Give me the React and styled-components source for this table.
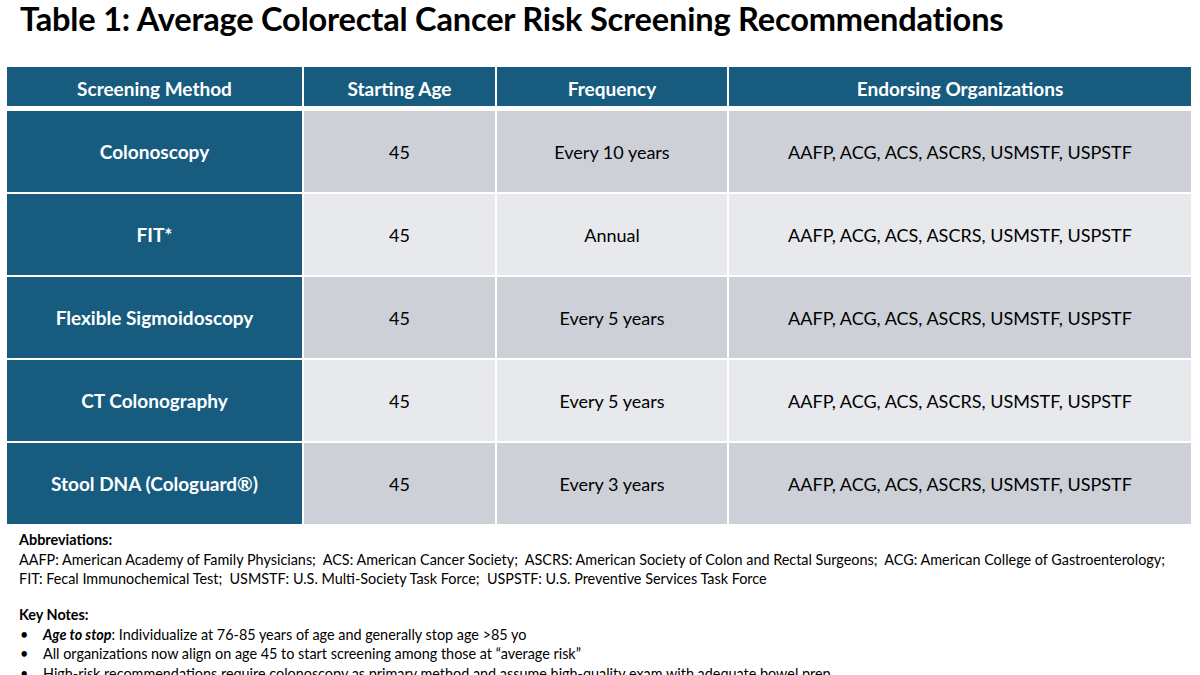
import React from "react";
import styled, { createGlobalStyle } from "styled-components";

const GlobalStyle = createGlobalStyle`
  html, body {
    margin: 0;
    padding: 0;
    background: #ffffff;
  }
  body {
    font-family: Lato, "Open Sans", "Liberation Sans", sans-serif;
    color: #000;
  }
`;

const Page = styled.div`
  width: 1200px;
  height: 675px;
  overflow: hidden;
  padding-left: 7px;
  box-sizing: border-box;
`;

const Title = styled.h1`
  margin: 0;
  height: 67px;
  padding: 2px 0 0 13px;
  box-sizing: border-box;
  font-size: 32.6px;
  line-height: 34px;
  font-weight: 700;
  letter-spacing: -0.2px;
`;

const Table = styled.div`
  display: flex;
  flex-direction: column;
  gap: 5px;
  width: 1184px;
`;

const Grid = styled.div`
  display: grid;
  grid-template-columns: 295px 191px 230px 462px;
  grid-auto-rows: ${(p) => p.$rowHeight}px;
  gap: 2px;
`;

const Cell = styled.div`
  display: flex;
  align-items: center;
  justify-content: center;
  text-align: center;
  font-size: ${(p) => (p.$dark ? "19px" : "18px")};
  background: ${(p) => (p.$dark ? "#175c7f" : p.$alt ? "#e7e9ec" : "#cdd1d7")};
  color: ${(p) => (p.$dark ? "#ffffff" : "#000000")};
  font-weight: ${(p) => (p.$dark ? 700 : 400)};
`;

const HeadCell = styled(Cell)`
  padding-top: 4px;
  box-sizing: border-box;
`;

const Notes = styled.div`
  margin-top: 6px;
  padding-left: 12px;
  font-size: 14.4px;
  line-height: 19.5px;
`;

const Label = styled.div`
  font-weight: 700;
`;

const Spacer = styled.div`
  height: 16.5px;
`;

const Bullets = styled.ul`
  margin: 0;
  padding: 0;
  list-style: none;
`;

const Bullet = styled.li`
  display: flex;
  white-space: nowrap;
  &::before {
    content: "•";
    width: 23px;
    padding-left: 1px;
    flex-shrink: 0;
  }
`;

const headers = ["Screening Method", "Starting Age", "Frequency", "Endorsing Organizations"];

const orgs = "AAFP, ACG, ACS, ASCRS, USMSTF, USPSTF";

const rows = [
  ["Colonoscopy", "45", "Every 10 years"],
  ["FIT*", "45", "Annual"],
  ["Flexible Sigmoidoscopy", "45", "Every 5 years"],
  ["CT Colonography", "45", "Every 5 years"],
  ["Stool DNA (Cologuard®)", "45", "Every 3 years"],
];

export default function App() {
  return (
    <>
      <GlobalStyle />
      <Page>
        <Title>Table 1: Average Colorectal Cancer Risk Screening Recommendations</Title>
        <Table>
          <Grid $rowHeight={39}>
            {headers.map((h) => (
              <HeadCell key={h} $dark>
                {h}
              </HeadCell>
            ))}
          </Grid>
          <Grid $rowHeight={81}>
            {rows.map(([method, age, freq], i) => (
              <React.Fragment key={method}>
                <Cell $dark>{method}</Cell>
                <Cell $alt={i % 2 === 1}>{age}</Cell>
                <Cell $alt={i % 2 === 1}>{freq}</Cell>
                <Cell $alt={i % 2 === 1}>{orgs}</Cell>
              </React.Fragment>
            ))}
          </Grid>
        </Table>
        <Notes>
          <Label>Abbreviations:</Label>
          <div>
            AAFP: American Academy of Family Physicians;&nbsp; ACS: American Cancer Society;&nbsp; ASCRS: American
            Society of Colon and Rectal Surgeons;&nbsp; ACG: American College of Gastroenterology;
          </div>
          <div>
            FIT: Fecal Immunochemical Test;&nbsp; USMSTF: U.S. Multi-Society Task Force;&nbsp; USPSTF: U.S. Preventive
            Services Task Force
          </div>
          <Spacer />
          <Label>Key Notes:</Label>
          <Bullets>
            <Bullet>
              <span>
                <b>
                  <i>Age to stop</i>
                </b>
                : Individualize at 76-85 years of age and generally stop age &gt;85 yo
              </span>
            </Bullet>
            <Bullet>All organizations now align on age 45 to start screening among those at “average risk”</Bullet>
            <Bullet>
              High-risk recommendations require colonoscopy as primary method and assume high-quality exam with adequate
              bowel prep
            </Bullet>
          </Bullets>
        </Notes>
      </Page>
    </>
  );
}
